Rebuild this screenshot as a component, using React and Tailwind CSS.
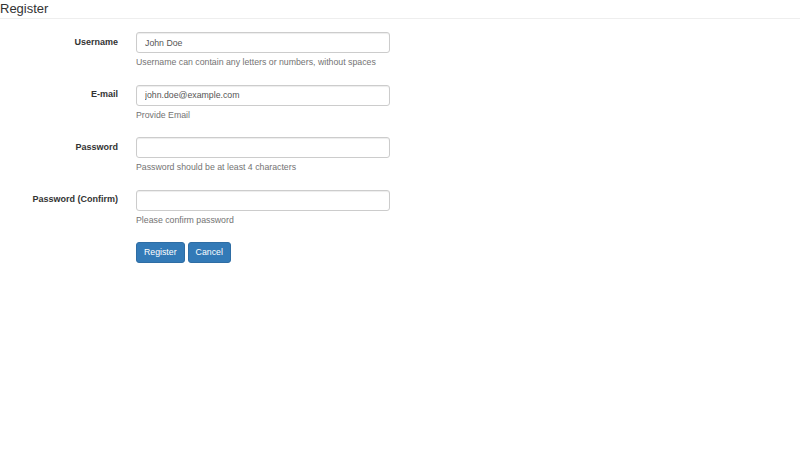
const fields = [
  { label: 'Username', value: 'John Doe', help: 'Username can contain any letters or numbers, without spaces', type: 'text' },
  { label: 'E-mail', value: 'john.doe@example.com', help: 'Provide Email', type: 'email' },
  { label: 'Password', value: '', help: 'Password should be at least 4 characters', type: 'password' },
  { label: 'Password (Confirm)', value: '', help: 'Please confirm password', type: 'password' },
]

const Field = ({ label, value, help, type }) => (
  <div className="flex items-start mb-[15.5px]">
    <label className="w-[118px] h-[21px] flex items-center justify-end font-bold text-[9px] text-[#333]">
      {label}
    </label>
    <div className="ml-[18px] w-[254px]">
      <input
        type={type}
        defaultValue={value}
        className="block w-full h-[21px] px-[8px] text-[8.75px] text-[#555] bg-white border border-[#ccc] rounded-[3px] shadow-[inset_0_1px_1px_rgba(0,0,0,0.075)] outline-none"
      />
      <p className="mt-[2px] leading-[14px] text-[8.75px] text-[#737373] whitespace-nowrap">{help}</p>
    </div>
  </div>
)

export default function App() {
  return (
    <div className="min-h-[450px] bg-white font-['Liberation_Sans',Arial,sans-serif] text-[#333]">
      <h1 className="h-[19px] text-[13px] leading-[18px] border-b border-[#eee]">Register</h1>
      <form className="pt-[13px]" onSubmit={(e) => e.preventDefault()}>
        {fields.map((f) => (
          <Field key={f.label} {...f} />
        ))}
        <div className="flex gap-[3px] ml-[136px]">
          <button type="submit" className="h-[21px] px-[7px] text-[8.75px] text-white bg-[#337ab7] border border-[#2e6da4] rounded-[3px]">
            Register
          </button>
          <button type="button" className="h-[21px] px-[7px] text-[8.75px] text-white bg-[#337ab7] border border-[#2e6da4] rounded-[3px]">
            Cancel
          </button>
        </div>
      </form>
    </div>
  )
}
